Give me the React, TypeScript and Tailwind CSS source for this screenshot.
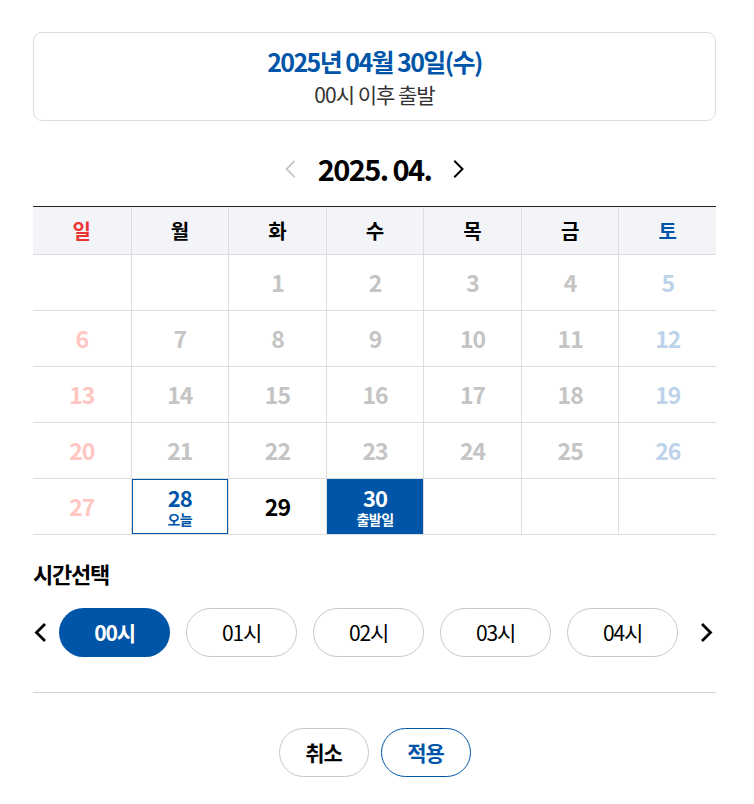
const weekdays = ['일', '월', '화', '수', '목', '금', '토'];

type Day = { n?: number; kind?: 'today' | 'selected' | 'active' };

const weeks: Day[][] = [
  [{}, {}, { n: 1 }, { n: 2 }, { n: 3 }, { n: 4 }, { n: 5 }],
  [{ n: 6 }, { n: 7 }, { n: 8 }, { n: 9 }, { n: 10 }, { n: 11 }, { n: 12 }],
  [{ n: 13 }, { n: 14 }, { n: 15 }, { n: 16 }, { n: 17 }, { n: 18 }, { n: 19 }],
  [{ n: 20 }, { n: 21 }, { n: 22 }, { n: 23 }, { n: 24 }, { n: 25 }, { n: 26 }],
  [{ n: 27 }, { n: 28, kind: 'today' }, { n: 29, kind: 'active' }, { n: 30, kind: 'selected' }, {}, {}, {}],
];

const hours = ['00시', '01시', '02시', '03시', '04시'];

function Chevron({ dir, className, stroke }: { dir: 'left' | 'right'; className: string; stroke: number }) {
  return (
    <svg viewBox="0 0 12 18" className={className} fill="none" stroke="currentColor" strokeWidth={stroke} strokeLinecap="square">
      <polyline points={dir === 'left' ? '10,1.5 2.5,9 10,16.5' : '2,1.5 9.5,9 2,16.5'} />
    </svg>
  );
}

function DayCell({ day, col }: { day: Day; col: number }) {
  const edge = col > 0 ? 'border-l border-[#dddddd]' : '';

  if (day.kind === 'selected') {
    return (
      <div className={`h-[55px] ${edge} bg-[#0055a8] flex flex-col items-center justify-center text-white`}>
        <div className="text-[22px] font-bold leading-[24px] tracking-[-1px]">{day.n}</div>
        <div className="text-[14px] font-bold leading-[18px] mt-[1px] tracking-[-0.5px]">출발일</div>
      </div>
    );
  }

  if (day.kind === 'today') {
    return (
      <div className={`h-[55px] ${edge} flex`}>
        <div className="flex-1 border border-[#0055a8] flex flex-col items-center justify-center text-[#0055a8]">
          <div className="text-[22px] font-bold leading-[24px] tracking-[-1px]">{day.n}</div>
          <div className="text-[14px] font-bold leading-[18px] mt-[1px] tracking-[-0.5px]">오늘</div>
        </div>
      </div>
    );
  }

  let color = 'text-[#c4c4c4]';
  if (day.kind === 'active') color = 'text-black';
  else if (col === 0) color = 'text-[#ffc6c1]';
  else if (col === 6) color = 'text-[#bdd3ea]';

  return (
    <div className={`h-[55px] ${edge} flex items-center justify-center`}>
      <span className={`text-[23px] font-bold tracking-[-1px] ${color}`}>{day.n ?? ''}</span>
    </div>
  );
}

export default function App() {
  return (
    <div
      className="w-[754px] h-[804px] bg-white pl-[33px] pr-[38px] pt-[32px]"
      style={{ fontFamily: '"Noto Sans CJK KR", "Noto Sans", sans-serif' }}
    >
      {/* Summary */}
      <div className="h-[89px] border border-[#dedede] rounded-[9px] flex flex-col items-center justify-center">
        <div className="text-[25px] font-bold text-[#0055a8] tracking-[-1.6px] leading-[34px]">2025년 04월 30일(수)</div>
        <div className="text-[21px] text-[#333333] tracking-[-1px] leading-[32px]">00시 이후 출발</div>
      </div>

      {/* Month nav */}
      <div className="mt-[26px] h-[44px] flex items-center justify-center gap-[22px]">
        <Chevron dir="left" className="w-[12px] h-[18px] text-[#c8c8c8]" stroke={1.8} />
        <span className="text-[29px] font-bold text-black tracking-[-1.6px]">2025. 04.</span>
        <Chevron dir="right" className="w-[12px] h-[18px] text-black" stroke={2} />
      </div>

      {/* Calendar */}
      <div className="mt-[15px] border-t border-[#222222]">
        <div className="grid grid-cols-7 bg-[#f3f4f8] border-b border-[#dddddd]">
          {weekdays.map((w, i) => (
            <div
              key={w}
              className={`h-[47px] flex items-center justify-center text-[20px] font-bold ${i > 0 ? 'border-l border-[#dddddd]' : ''} ${
                i === 0 ? 'text-[#ee3333]' : i === 6 ? 'text-[#0055a8]' : 'text-black'
              }`}
            >
              {w}
            </div>
          ))}
        </div>
        {weeks.map((week, r) => (
          <div key={r} className="grid grid-cols-7 border-b border-[#dddddd]">
            {week.map((d, c) => (
              <DayCell key={c} day={d} col={c} />
            ))}
          </div>
        ))}
      </div>

      {/* Time select */}
      <div className="mt-[23px] text-[22px] font-bold text-black tracking-[-1.2px] leading-[30px]">시간선택</div>
      <div className="mt-[20px] flex items-center">
        <Chevron dir="left" className="w-[12px] h-[19px] text-black ml-[1px] mr-[13px]" stroke={2.8} />
        <div className="flex gap-[16px]">
          {hours.map((h, i) => (
            <div
              key={h}
              className={`w-[111px] h-[49px] rounded-full flex items-center justify-center text-[21px] tracking-[-1.2px] ${
                i === 0 ? 'bg-[#0055a8] text-white font-bold' : 'border border-[#c8c8c8] text-black'
              }`}
            >
              {h}
            </div>
          ))}
        </div>
        <Chevron dir="right" className="w-[12px] h-[19px] text-black ml-[23px]" stroke={2.8} />
      </div>

      <div className="mt-[35px] border-t border-[#d0d0d0]" />

      {/* Actions */}
      <div className="mt-[35px] flex justify-center gap-[12px]">
        <button className="w-[90px] h-[49px] rounded-full border border-[#c8c8c8] text-[21px] font-bold text-black tracking-[-1px]">
          취소
        </button>
        <button className="w-[90px] h-[49px] rounded-full border border-[#0055a8] text-[21px] font-bold text-[#0055a8] tracking-[-1px]">
          적용
        </button>
      </div>
    </div>
  );
}
